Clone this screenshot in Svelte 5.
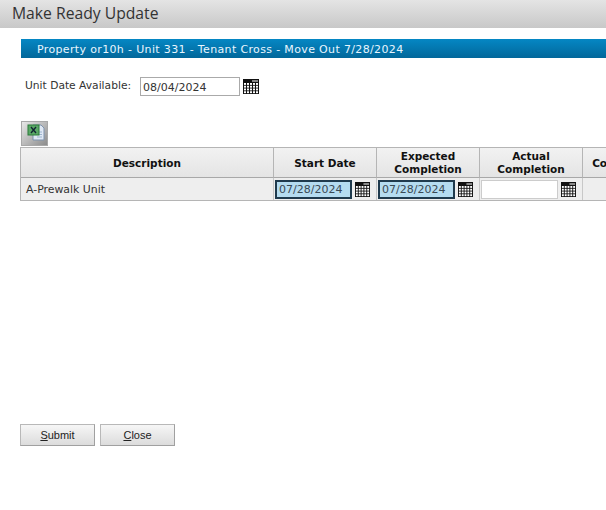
<script>
  let availableDate = '08/04/2024';

  const columns = ['Description', 'Start Date', 'Expected Completion', 'Actual Completion', 'Comments'];

  const row = {
    description: 'A-Prewalk Unit',
    start: '07/28/2024',
    expected: '07/28/2024',
    actual: ''
  };
</script>

{#snippet calendar()}
  <svg class="cal" viewBox="0 0 16 15" preserveAspectRatio="none" aria-hidden="true">
    <rect x="0" y="0" width="16" height="15" fill="#111" />
    <rect x="9" y="1" width="6" height="2" fill="#888" />
    {#each [4, 6.75, 9.5, 12.25] as y}
      {#each [1, 4, 7, 10, 13] as x}
        <rect {x} {y} width="2" height="1.9" fill="#fff" />
      {/each}
    {/each}
  </svg>
{/snippet}

<div class="page">
  <header class="title">Make Ready Update</header>

  <div class="banner">Property or10h - Unit 331 - Tenant Cross - Move Out 7/28/2024</div>

  <div class="date-row">
    <label for="avail">Unit Date Available:</label>
    <input id="avail" class="date" type="text" bind:value={availableDate} />
    {@render calendar()}
  </div>

  <button class="excel" title="Export" aria-label="Export to Excel">
    <svg width="20" height="20" viewBox="0 0 20 20">
      <path d="M7 3h8l3 3v12H7z" fill="#dfe8f4" stroke="#7f93ad" />
      <path d="M11 10h5M11 12.5h5M11 15h5" stroke="#9db4cf" />
      <rect x="2" y="3" width="11" height="10" fill="#5aa866" stroke="#2a7a38" />
      <path d="M5 5l5 6M10 5l-5 6" stroke="#123" stroke-width="1.3" />
    </svg>
  </button>

  <div class="grid">
    {#each columns as col}
      <div class="head">{col}</div>
    {/each}

    <div class="cell desc">{row.description}</div>
    <div class="cell pick">
      <input class="date filled" type="text" value={row.start} />
      {@render calendar()}
    </div>
    <div class="cell pick">
      <input class="date filled" type="text" value={row.expected} />
      {@render calendar()}
    </div>
    <div class="cell pick">
      <input class="date" type="text" value={row.actual} />
      {@render calendar()}
    </div>
    <div class="cell"></div>
  </div>

  <div class="actions">
    <button class="btn"><u>S</u>ubmit</button>
    <button class="btn"><u>C</u>lose</button>
  </div>
</div>

<style>
  :global(body) {
    margin: 0;
    background: #fff;
    overflow: hidden;
  }

  .page {
    width: 606px;
    height: 510px;
    overflow: hidden;
    font-family: "DejaVu Sans", Verdana, sans-serif;
    font-size: 11px;
    color: #333;
  }

  .title {
    height: 28px;
    box-sizing: border-box;
    padding: 2px 0 0 12px;
    font-family: "Open Sans", sans-serif;
    font-size: 15.7px;
    line-height: 22px;
    color: #333;
    background: linear-gradient(#e4e4e4, #c8c8c8);
  }

  .banner {
    margin: 11px 0 0 21px;
    height: 19px;
    box-sizing: border-box;
    padding: 1px 0 0 16px;
    line-height: 19px;
    letter-spacing: 0.35px;
    color: #e8f6ff;
    background: linear-gradient(#0587c4, #02679a);
    white-space: nowrap;
  }

  .date-row {
    display: flex;
    align-items: center;
    margin: 19px 0 0 25px;
    height: 19px;
  }

  .date-row label {
    width: 115px;
    margin-top: -3px;
    font-size: 10.7px;
  }

  .date {
    box-sizing: border-box;
    width: 100px;
    height: 19px;
    padding: 1px 2px 0;
    border: 1px solid #aaa;
    background: #fff;
    font: inherit;
    color: #333;
    border-radius: 0;
  }

  .cal {
    width: 16px;
    height: 15px;
    margin-left: 3px;
    flex: none;
  }

  .excel {
    display: block;
    box-sizing: border-box;
    width: 27px;
    height: 25px;
    margin: 25px 0 0 21px;
    padding: 0 0 0 3px;
    border: 1px solid #a8a8a8;
    background: linear-gradient(135deg, #e8e8e8, #8c8c8c);
  }

  .grid {
    display: grid;
    grid-template-columns: 253px 103px 103px 103px 82px;
    grid-template-rows: 30px 22px;
    width: max-content;
    margin: 1px 0 0 20px;
    border: solid #b5b5b5;
    border-width: 1px 0 1px 1px;
    background: #eee;
  }

  .head {
    display: flex;
    align-items: center;
    justify-content: center;
    box-sizing: border-box;
    padding: 1px 8px 0;
    text-align: center;
    font-size: 10.5px;
    font-weight: 700;
    line-height: 13px;
    color: #111;
    background: linear-gradient(#f2f2f2, #e4e4e4);
    border-right: 1px solid #b5b5b5;
    border-bottom: 1px solid #a8a8a8;
  }

  .cell {
    box-sizing: border-box;
    border-right: 1px solid #c8c8c8;
    display: flex;
    align-items: center;
  }

  .desc {
    padding: 1px 0 0 5px;
    font-size: 10.9px;
  }

  .pick {
    padding-left: 1px;
  }

  .pick .date {
    width: 77px;
    height: 19px;
    border-color: #ccc;
  }

  .pick .cal {
    width: 15px;
    margin-left: 3px;
  }

  .pick .filled {
    background: #b5dcf0;
    border: 2px solid #1f3a4d;
    padding: 1px 2px 0;
    color: #3a4a55;
  }

  .actions {
    display: flex;
    gap: 5px;
    margin: 223px 0 0 20px;
  }

  .btn {
    box-sizing: border-box;
    width: 75px;
    height: 22px;
    padding: 0;
    border: 1px solid #b8b8b8;
    border-right-color: #a0a0a0;
    border-bottom-color: #a0a0a0;
    background: linear-gradient(#f6f6f6, #dcdcdc);
    font-family: "Liberation Sans", Arial, sans-serif;
    font-size: 11px;
    color: #222;
  }
</style>
